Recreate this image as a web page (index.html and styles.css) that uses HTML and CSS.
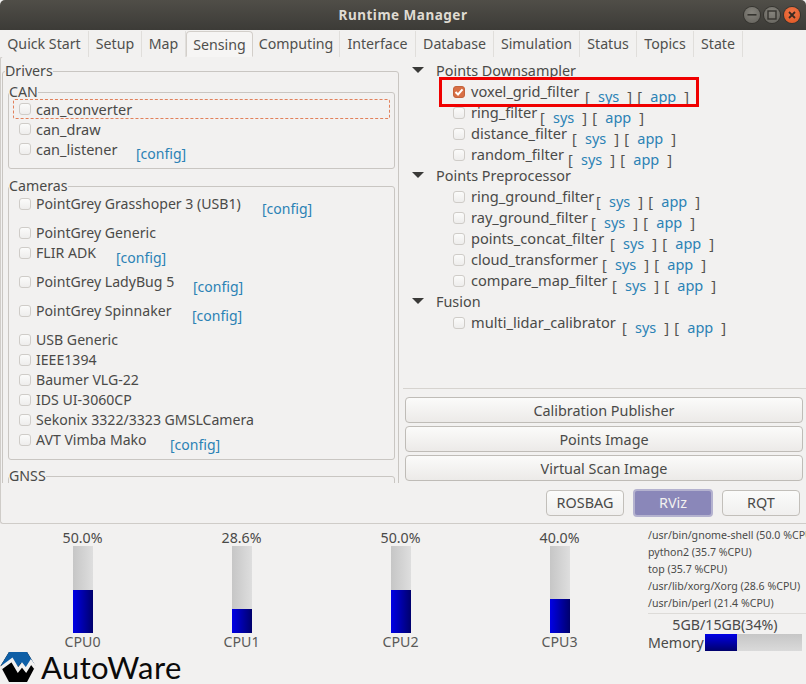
FILE: index.html
```html
<!DOCTYPE html>
<html lang="en">
<head>
<meta charset="utf-8">
<title>Runtime Manager</title>
<link rel="stylesheet" href="styles.css">
</head>
<body>
<div class="window">
  <header class="titlebar">
    <span class="title">Runtime Manager</span>
    <div class="controls">
      <span class="ctl ctl-min"><svg width="12" height="12" viewBox="0 0 12 12"><rect x="1.5" y="5" width="9" height="1.6" fill="#35342f"/></svg></span>
      <span class="ctl ctl-max"><svg width="12" height="12" viewBox="0 0 12 12"><rect x="2" y="2" width="8" height="8" fill="none" stroke="#35342f" stroke-width="1.4"/></svg></span>
      <span class="ctl ctl-close"><svg width="12" height="12" viewBox="0 0 12 12"><path d="M3 3l6 6M9 3l-6 6" stroke="#3a2a20" stroke-width="1.8"/></svg></span>
    </div>
  </header>
  <nav class="tabs">
    <span class="tab t1">Quick Start</span>
    <span class="tab t2">Setup</span>
    <span class="tab t3">Map</span>
    <span class="tab active t4">Sensing</span>
    <span class="tab t5">Computing</span>
    <span class="tab t6">Interface</span>
    <span class="tab t7">Database</span>
    <span class="tab t8">Simulation</span>
    <span class="tab t9">Status</span>
    <span class="tab t10">Topics</span>
    <span class="tab t11">State</span>
  </nav>
  <main class="panel">
    <div class="columns">
      <section class="left">
        <fieldset class="frame drivers">
          <legend>Drivers</legend>
          <fieldset class="frame group">
            <legend>CAN</legend>
            <div class="rows rows-can">
              <div class="row focused"><span class="cb"></span><span class="lbl snake">can_converter</span></div>
              <div class="row"><span class="cb"></span><span class="lbl snake">can_draw</span></div>
              <div class="row tall"><span class="cb"></span><span class="lbl snake">can_listener</span><a class="cfg cfg-listener">[config]</a></div>
            </div>
          </fieldset>
          <fieldset class="frame group">
            <legend>Cameras</legend>
            <div class="rows">
              <div class="row tall"><span class="cb"></span><span class="lbl">PointGrey Grasshoper 3 (USB1)</span><a class="cfg cfg-grass">[config]</a></div>
              <div class="row"><span class="cb"></span><span class="lbl">PointGrey Generic</span></div>
              <div class="row tall"><span class="cb"></span><span class="lbl">FLIR ADK</span><a class="cfg cfg-flir">[config]</a></div>
              <div class="row tall"><span class="cb"></span><span class="lbl">PointGrey LadyBug 5</span><a class="cfg cfg-lady">[config]</a></div>
              <div class="row tall"><span class="cb"></span><span class="lbl">PointGrey Spinnaker</span><a class="cfg cfg-spin">[config]</a></div>
              <div class="row"><span class="cb"></span><span class="lbl">USB Generic</span></div>
              <div class="row"><span class="cb"></span><span class="lbl">IEEE1394</span></div>
              <div class="row"><span class="cb"></span><span class="lbl">Baumer VLG-22</span></div>
              <div class="row"><span class="cb"></span><span class="lbl">IDS UI-3060CP</span></div>
              <div class="row"><span class="cb"></span><span class="lbl">Sekonix 3322/3323 GMSLCamera</span></div>
              <div class="row tall"><span class="cb"></span><span class="lbl">AVT Vimba Mako</span><a class="cfg cfg-avt">[config]</a></div>
            </div>
          </fieldset>
          <fieldset class="frame group gnss">
            <legend>GNSS</legend>
          </fieldset>
        </fieldset>
      </section>
      <section class="right">
        <div class="tree">
          <div class="node"><span class="tri"></span>Points Downsampler</div>
          <div class="leaf"><span class="cb checked"><svg width="12" height="12" viewBox="0 0 12 12"><path d="M2.500 6l2.500 2.500L9.500 3.300" fill="none" stroke="#fff" stroke-width="2"/></svg></span><span class="lbl w1">voxel_grid_filter</span><span class="links"><i>[</i><a>sys</a><i>]</i><i class="b2">[</i><a>app</a><i>]</i></span></div>
          <div class="leaf"><span class="cb"></span><span class="lbl w2">ring_filter</span><span class="links"><i>[</i><a>sys</a><i>]</i><i class="b2">[</i><a>app</a><i>]</i></span></div>
          <div class="leaf"><span class="cb"></span><span class="lbl w3">distance_filter</span><span class="links"><i>[</i><a>sys</a><i>]</i><i class="b2">[</i><a>app</a><i>]</i></span></div>
          <div class="leaf"><span class="cb"></span><span class="lbl w4">random_filter</span><span class="links"><i>[</i><a>sys</a><i>]</i><i class="b2">[</i><a>app</a><i>]</i></span></div>
          <div class="node"><span class="tri"></span>Points Preprocessor</div>
          <div class="leaf"><span class="cb"></span><span class="lbl w5">ring_ground_filter</span><span class="links"><i>[</i><a>sys</a><i>]</i><i class="b2">[</i><a>app</a><i>]</i></span></div>
          <div class="leaf"><span class="cb"></span><span class="lbl w6">ray_ground_filter</span><span class="links"><i>[</i><a>sys</a><i>]</i><i class="b2">[</i><a>app</a><i>]</i></span></div>
          <div class="leaf"><span class="cb"></span><span class="lbl w7">points_concat_filter</span><span class="links"><i>[</i><a>sys</a><i>]</i><i class="b2">[</i><a>app</a><i>]</i></span></div>
          <div class="leaf"><span class="cb"></span><span class="lbl w8">cloud_transformer</span><span class="links"><i>[</i><a>sys</a><i>]</i><i class="b2">[</i><a>app</a><i>]</i></span></div>
          <div class="leaf"><span class="cb"></span><span class="lbl w9">compare_map_filter</span><span class="links"><i>[</i><a>sys</a><i>]</i><i class="b2">[</i><a>app</a><i>]</i></span></div>
          <div class="node"><span class="tri"></span>Fusion</div>
          <div class="leaf"><span class="cb"></span><span class="lbl w10">multi_lidar_calibrator</span><span class="links"><i>[</i><a>sys</a><i>]</i><i class="b2">[</i><a>app</a><i>]</i></span></div>
          <div class="highlight"></div>
        </div>
        <div class="actions">
          <button class="wide">Calibration Publisher</button>
          <button class="wide">Points Image</button>
          <button class="wide">Virtual Scan Image</button>
        </div>
      </section>
    </div>
    <div class="toolbar">
      <button class="tool">ROSBAG</button>
      <button class="tool on">RViz</button>
      <button class="tool">RQT</button>
    </div>
  </main>
  <footer class="footer">
    <div class="footer-left">
      <div class="cpus">
        <div class="cpu"><span class="pct">50.0%</span><div class="vbar"><div class="vfill" style="height:50%"></div></div><span class="cname">CPU0</span></div>
        <div class="cpu"><span class="pct">28.6%</span><div class="vbar"><div class="vfill" style="height:28%"></div></div><span class="cname">CPU1</span></div>
        <div class="cpu"><span class="pct">50.0%</span><div class="vbar"><div class="vfill" style="height:50%"></div></div><span class="cname">CPU2</span></div>
        <div class="cpu"><span class="pct">40.0%</span><div class="vbar"><div class="vfill" style="height:39%"></div></div><span class="cname">CPU3</span></div>
      </div>
      <div class="logo">
        <svg class="mark" width="36" height="30" viewBox="0 0 36 30">
          <path d="M9 0H27L35.500 14 27 30H9L.5 14Z" fill="#000"/>
          <path d="M9 0H27L35.500 14 31 9 26 16 21 11 18 15 13 8 .5 14Z" fill="#0f5fa6"/>
          <path d="M1 16 12 8 18 18 22 13 26 18 31 10 35.500 16" fill="none" stroke="#f2f1f0" stroke-width="3.400"/>
        </svg>
        <span class="wordmark">AutoWare</span>
      </div>
    </div>
    <div class="stats">
      <ul class="procs">
        <li>/usr/bin/gnome-shell (50.0 %CPU)</li>
        <li>python2 (35.7 %CPU)</li>
        <li>top (35.7 %CPU)</li>
        <li>/usr/lib/xorg/Xorg (28.6 %CPU)</li>
        <li>/usr/bin/perl (21.4 %CPU)</li>
      </ul>
      <div class="memtext">5GB/15GB(34%)</div>
      <div class="memrow"><span class="memname">Memory</span><div class="hbar"><div class="hfill" style="width:33%"></div></div></div>
    </div>
  </footer>
</div>
</body>
</html>
```

FILE: styles.css
```css
* { box-sizing: border-box; }
html, body { margin: 0; padding: 0; }
body {
  width: 806px; height: 684px; overflow: hidden;
  background: #f2f1f0; color: #4a4a48;
  font-family: "Noto Sans", "Open Sans", sans-serif; font-size: 14.2px;
}
.window { width: 806px; height: 684px; display: flex; flex-direction: column; overflow: hidden; }

.titlebar {
  height: 30px; flex: none; position: relative;
  display: flex; align-items: center; justify-content: center;
  background: linear-gradient(#504e48, #3c3b37);
  border-radius: 5px 5px 0 0;
}
.title { color: #dfdbd2; font-weight: 700; font-size: 13.5px; letter-spacing: .5px; }
.controls { position: absolute; right: 6px; top: 7px; display: flex; gap: 4px; }
.ctl { width: 16px; height: 16px; border-radius: 50%; display: flex; align-items: center; justify-content: center; box-shadow: 0 0 0 1px #35342f; }
.ctl-min, .ctl-max { background: radial-gradient(circle at 50% 35%, #85837c, #63615b); }
.ctl-close { background: radial-gradient(circle at 50% 35%, #f0764a, #e0551f); }

.tabs { height: 27px; flex: none; display: flex; align-items: flex-end; background: #f2f1f0; position: relative; z-index: 1; }
.tab { height: 26px; line-height: 26px; text-align: center; color: #4f4f4d; border-right: 1px solid #e0dedb; white-space: nowrap; }
.tab.active { height: 26px; background: #f6f5f4; border: 1px solid #d3cfca; border-bottom: 1px solid #f6f5f4; border-radius: 4px 4px 0 0; }
.t1 { width: 89px; } .t2 { width: 53px; } .t3 { width: 44px; } .t4 { width: 67px; }
.t5 { width: 87px; } .t6 { width: 76px; } .t7 { width: 78px; } .t8 { width: 86px; }
.t9 { width: 57px; } .t10 { width: 57px; } .t11 { width: 49px; }

.panel {
  height: 468px; flex: none; margin-top: -1px;
  border: 1px solid #cfccc8; border-right: 0; border-radius: 3px 0 0 3px;
  display: flex; flex-direction: column;
}
.columns { height: 426px; flex: none; display: flex; }
.left { width: 402px; flex: none; height: 426px; overflow: hidden; padding: 5px 4px 0 1px; }
.right { flex: 1; display: flex; flex-direction: column; min-width: 0; }

.frame { margin: 0; padding: 0; border: 1px solid #c9c6c2; border-radius: 3px; min-width: 0; }
.frame legend { padding: 0; line-height: 18px; height: 18px; color: #4a4a48; }
.drivers { height: 460px; padding: 3px 3px 0 5px; }
.drivers > legend { margin-left: -3px; }
.group + .group { margin-top: 8px; }
.group + .gnss { margin-top: 7px; }
.group legend { margin-left: 0; }
.gnss { height: 40px; }
.rows { margin-top: -1px; display: flex; flex-direction: column; }
.rows-can { margin-top: -2px; }

.row { height: 20px; display: flex; align-items: flex-start; padding-left: 10px; position: relative; }
.row.tall { height: 29px; }
.focused { margin: 0 4px; padding-left: 5px; border: 1px dashed #e2805a; border-radius: 2px; height: 20px; }
.focused .cb { margin-top: 3px; }
.focused .lbl { line-height: 18px; }
.cb {
  width: 12px; height: 12px; flex: none; margin-top: 4px;
  border: 1px solid #cfccc8; border-radius: 3px;
  background: linear-gradient(#fbfbfa, #eeedec);
  display: block;
}
.cb svg { display: block; margin: -1px; }
.checked { background: #d86f45; border-color: #c4623b; }
.lbl { margin-left: 5px; line-height: 20px; white-space: nowrap; font-size: 14.1px; }
.lbl.snake { font-size: 14.5px; }
.cfg { position: absolute; top: 5px; line-height: 20px; font-size: 14px; color: #2b82b5; white-space: nowrap; }
.cfg-listener { left: 127px; }
.cfg-grass { left: 253px; }
.cfg-flir { left: 107px; }
.cfg-lady { left: 184px; }
.cfg-spin { left: 183px; }
.cfg-avt { left: 161px; }

.tree { height: 331px; flex: none; padding-top: 3px; position: relative; }
.node { height: 21px; line-height: 21px; padding-left: 33px; position: relative; font-size: 14.4px; }
.tri { position: absolute; left: 9px; top: 7px; width: 0; height: 0; border-left: 6px solid transparent; border-right: 6px solid transparent; border-top: 6px solid #3a3a38; }
.leaf { height: 21px; display: flex; align-items: flex-start; padding-left: 50px; }
.leaf .cb { margin-top: 5px; }
.leaf .lbl { line-height: 21px; margin-left: 6px; font-size: 14.6px; }
.w1 { width: 114px; } .w2 { width: 69px; } .w3 { width: 101px; } .w4 { width: 97px; } .w5 { width: 125px; }
.w6 { width: 120px; } .w7 { width: 139px; } .w8 { width: 131px; } .w9 { width: 141px; } .w10 { width: 151px; }
.links { margin-top: 5px; line-height: 21px; display: flex; white-space: nowrap; font-size: 14.5px; }
.links i { font-style: normal; color: #54524f; width: 4px; }
.links a { color: #2b82b5; margin-left: 9px; margin-right: 8px; }
.links .b2 { margin-left: 6px; }
.highlight { position: absolute; left: 36px; top: 20px; width: 260px; height: 30px; border: 3px solid #f00000; pointer-events: none; }

.actions { flex: 1; border-top: 1px solid #d6d3cf; padding: 8px 2px 0; display: flex; flex-direction: column; gap: 3px; overflow: hidden; }
button { font-family: inherit; font-size: 14.4px; color: #4a4a48; cursor: default; }
.wide { height: 26px; flex: none; width: 398px; padding: 0; border: 1px solid #bfbcb7; border-radius: 4px; background: linear-gradient(#fbfbfa, #eceae8); }

.toolbar { flex: 1; display: flex; justify-content: flex-end; align-items: center; gap: 9px; padding: 0 6px 1px 0; }
.tool { height: 26px; width: 78px; padding: 0; border: 1px solid #c2bfba; border-radius: 4px; background: linear-gradient(#fbfbfa, #f0efee); }
.tool.on { height: 28px; width: 80px; background: #8a87b9; color: #f2f1f0; border: 2px solid #b4b2cf; }

.footer { flex: 1; display: flex; min-height: 0; }
.footer-left { width: 648px; flex: none; display: flex; flex-direction: column; }
.cpus { display: flex; padding: 6px 0 0 3px; height: 128px; flex: none; }
.cpu { width: 159px; flex: none; display: flex; flex-direction: column; align-items: center; }
.pct { line-height: 16px; height: 16px; }
.vbar { width: 20px; height: 87px; flex: none; display: flex; align-items: flex-end; background: linear-gradient(90deg, #c6c6c6, #dedede); }
.vfill { width: 100%; background: linear-gradient(90deg, #0000e6, #00006c); }
.cname { line-height: 18px; height: 18px; color: #5a5a58; }
.logo { display: flex; align-items: flex-start; gap: 5px; height: 30px; }
.mark { flex: none; }
.wordmark { font-family: "Lato", sans-serif; font-weight: 400; font-size: 31px; line-height: 30px; height: 30px; color: #0a0a0a; letter-spacing: .4px; }

.stats { flex: 1; min-width: 0; display: flex; flex-direction: column; }
.procs { list-style: none; margin: 3px 0 0; padding: 0; height: 87px; border-bottom: 1px solid #dddbd8; }
.procs li { height: 17px; line-height: 17px; font-size: 10.6px; white-space: nowrap; }
.memtext { width: 154px; text-align: center; line-height: 18px; height: 18px; margin-top: 2px; }
.memrow { display: flex; align-items: flex-start; }
.memname { width: 57px; flex: none; line-height: 18px; }
.hbar { width: 97px; height: 17px; background: linear-gradient(#c6c6c6, #dadada); }
.hfill { height: 100%; background: linear-gradient(#0000e6, #00006c); }
```
